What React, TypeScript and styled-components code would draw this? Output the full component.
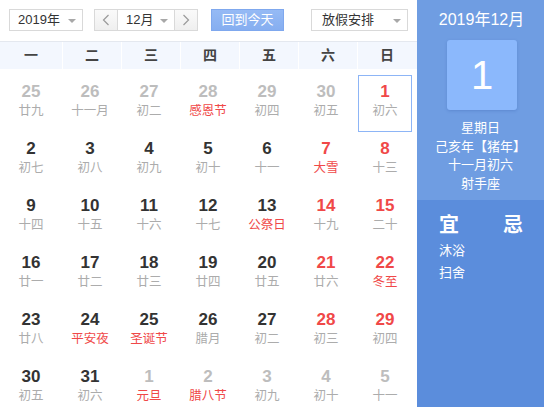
import React from "react";
import styled, { createGlobalStyle } from "styled-components";

const Global = createGlobalStyle`
  html, body { margin: 0; padding: 0; background: #fff; }
  body { font-family: "Liberation Sans", Arial, "Noto Sans CJK SC", sans-serif; }
  * { box-sizing: border-box; }
`;

const Page = styled.div`
  display: flex;
  width: 544px;
  height: 407px;
  overflow: hidden;
  background: #fff;
`;

const Left = styled.div`
  width: 417px;
  flex: none;
  display: flex;
  flex-direction: column;
`;

const Toolbar = styled.div`
  display: flex;
  align-items: center;
  height: 22px;
  margin-top: 9px;
  padding-left: 9px;
`;

const Select = styled.div<{ $w: number; $ml: number; $pl: number }>`
  position: relative;
  width: ${(p) => p.$w}px;
  margin-left: ${(p) => p.$ml}px;
  height: 22px;
  border: 1px solid #d9d9d9;
  background: #fff;
  color: #333;
  font-size: 13px;
  line-height: 20px;
  padding-left: ${(p) => p.$pl}px;
  font-family: "Liberation Sans", Arial, "Noto Sans CJK SC", sans-serif;
`;

const Caret = styled.span`
  position: absolute;
  right: 6px;
  top: 9px;
  width: 0;
  height: 0;
  border-left: 4px solid transparent;
  border-right: 4px solid transparent;
  border-top: 4px solid #a8a8a8;
`;

const MonthGroup = styled.div`
  display: flex;
  margin-left: 11px;
  height: 22px;
`;

const NavBtn = styled.div<{ $side: "l" | "r" }>`
  width: 23px;
  height: 22px;
  border: 1px solid #d9d9d9;
  ${(p) => (p.$side === "l" ? "border-right: none;" : "border-left: none;")}
  background: linear-gradient(#fafafa, #efefef);
  display: flex;
  align-items: center;
  justify-content: center;
`;

const MonthSelect = styled.div`
  position: relative;
  width: 58px;
  height: 22px;
  border: 1px solid #d9d9d9;
  background: #fff;
  color: #333;
  font-size: 13px;
  line-height: 20px;
  padding-left: 8px;
`;

const TodayBtn = styled.div`
  width: 73px;
  height: 22px;
  margin-left: 13px;
  border: 1px solid #7fa8ee;
  background: linear-gradient(#95baf5, #86aef0);
  color: #fff;
  font-size: 13px;
  line-height: 20px;
  text-align: center;
`;

const Header = styled.div`
  display: grid;
  grid-template-columns: 62px repeat(6, 59px);
  margin-top: 10px;
  height: 28px;
  border-top: 1px solid #e4e8ef;
  background: #f3f7fe;
`;

const HeadCell = styled.div<{ $first?: boolean }>`
  text-align: center;
  line-height: 27px;
  font-size: 14px;
  color: #444;
  font-weight: bold;
  border-left: ${(p) => (p.$first ? "none" : "1px solid #fff")};
`;

const Grid = styled.div`
  display: grid;
  grid-template-columns: repeat(7, 54px);
  grid-auto-rows: 57px;
  column-gap: 5px;
  margin-top: 6px;
  padding-left: 4px;
`;

const Cell = styled.div<{ $sel?: boolean }>`
  display: flex;
  flex-direction: column;
  align-items: center;
  padding-top: 6px;
  border: 1px solid ${(p) => (p.$sel ? "#8db5f6" : "transparent")};
`;

const Num = styled.div<{ $tone: "dark" | "red" | "grey" }>`
  font-size: 17px;
  font-weight: bold;
  line-height: 19px;
  color: ${(p) => (p.$tone === "dark" ? "#333" : p.$tone === "red" ? "#f04848" : "#bdbdbd")};
`;

const Lunar = styled.div<{ $red?: boolean }>`
  font-size: 12.5px;
  line-height: 16px;
  margin-top: 1px;
  color: ${(p) => (p.$red ? "#f04848" : "#acacac")};
  font-family: "Noto Sans CJK SC", sans-serif;
  white-space: nowrap;
`;

const Right = styled.div`
  width: 127px;
  flex: none;
  display: flex;
  flex-direction: column;
  color: #fff;
`;

const RightTop = styled.div`
  height: 200px;
  background: #6f9de2;
  display: flex;
  flex-direction: column;
  align-items: center;
  padding-top: 10px;
`;

const Title = styled.div`
  font-size: 16px;
  line-height: 20px;
  padding-left: 2px;
  font-family: "Liberation Sans", Arial, "Noto Sans CJK SC", sans-serif;
`;

const BigDay = styled.div`
  width: 70px;
  height: 70px;
  margin-top: 10px;
  margin-left: 3px;
  border-radius: 3px;
  background: #8bb8fc;
  box-shadow: 0 1px 3px rgba(40, 80, 160, 0.25);
  font-size: 40px;
  line-height: 70px;
  text-align: center;
  font-family: "Liberation Sans", Arial, sans-serif;
`;

const InfoList = styled.div`
  margin-top: 8px;
  display: flex;
  flex-direction: column;
  align-items: center;
  font-size: 13px;
  line-height: 18.5px;
  font-family: "Noto Sans CJK SC", sans-serif;
`;

const RightBottom = styled.div`
  flex: 1;
  background: #5b8ddc;
  display: grid;
  grid-template-columns: 64px 1fr;
  align-content: start;
  padding: 12px 0 0 22px;
  font-family: "Noto Sans CJK SC", sans-serif;
`;

const YiCol = styled.div`
  display: flex;
  flex-direction: column;
`;

const YiHead = styled.div`
  font-size: 20px;
  font-weight: bold;
  line-height: 24px;
  margin-bottom: 3px;
`;

const YiItem = styled.div`
  font-size: 13px;
  line-height: 22px;
`;

const Chevron = ({ dir }: { dir: "l" | "r" }) => (
  <svg width="8" height="12" viewBox="0 0 8 12">
    <path
      d={dir === "l" ? "M6.5 1 L1.5 6 L6.5 11" : "M1.5 1 L6.5 6 L1.5 11"}
      fill="none"
      stroke="#9a9a9a"
      strokeWidth="1.2"
    />
  </svg>
);

type Day = { n: number; l: string; tone: "dark" | "red" | "grey"; lr?: boolean; sel?: boolean };

const d = (n: number, l: string, tone: Day["tone"], lr = false, sel = false): Day => ({ n, l, tone, lr, sel });

const days: Day[] = [
  d(25, "廿九", "grey"), d(26, "十一月", "grey"), d(27, "初二", "grey"), d(28, "感恩节", "grey", true),
  d(29, "初四", "grey"), d(30, "初五", "grey"), d(1, "初六", "red", false, true),
  d(2, "初七", "dark"), d(3, "初八", "dark"), d(4, "初九", "dark"), d(5, "初十", "dark"),
  d(6, "十一", "dark"), d(7, "大雪", "red", true), d(8, "十三", "red"),
  d(9, "十四", "dark"), d(10, "十五", "dark"), d(11, "十六", "dark"), d(12, "十七", "dark"),
  d(13, "公祭日", "dark", true), d(14, "十九", "red"), d(15, "二十", "red"),
  d(16, "廿一", "dark"), d(17, "廿二", "dark"), d(18, "廿三", "dark"), d(19, "廿四", "dark"),
  d(20, "廿五", "dark"), d(21, "廿六", "red"), d(22, "冬至", "red", true),
  d(23, "廿八", "dark"), d(24, "平安夜", "dark", true), d(25, "圣诞节", "dark", true), d(26, "腊月", "dark"),
  d(27, "初二", "dark"), d(28, "初三", "red"), d(29, "初四", "red"),
  d(30, "初五", "dark"), d(31, "初六", "dark"), d(1, "元旦", "grey", true), d(2, "腊八节", "grey", true),
  d(3, "初九", "grey"), d(4, "初十", "grey"), d(5, "十一", "grey"),
];

const weekdays = ["一", "二", "三", "四", "五", "六", "日"];

export default function App() {
  return (
    <Page>
      <Global />
      <Left>
        <Toolbar>
          <Select $w={74} $ml={0} $pl={8}>
            2019年
            <Caret />
          </Select>
          <MonthGroup>
            <NavBtn $side="l">
              <Chevron dir="l" />
            </NavBtn>
            <MonthSelect>
              12月
              <Caret />
            </MonthSelect>
            <NavBtn $side="r">
              <Chevron dir="r" />
            </NavBtn>
          </MonthGroup>
          <TodayBtn>回到今天</TodayBtn>
          <Select $w={97} $ml={27} $pl={10}>
            放假安排
            <Caret />
          </Select>
        </Toolbar>
        <Header>
          {weekdays.map((w, i) => (
            <HeadCell key={w} $first={i === 0}>
              {w}
            </HeadCell>
          ))}
        </Header>
        <Grid>
          {days.map((day, i) => (
            <Cell key={i} $sel={day.sel}>
              <Num $tone={day.tone}>{day.n}</Num>
              <Lunar $red={day.lr}>{day.l}</Lunar>
            </Cell>
          ))}
        </Grid>
      </Left>
      <Right>
        <RightTop>
          <Title>2019年12月</Title>
          <BigDay>1</BigDay>
          <InfoList>
            <div>星期日</div>
            <div>己亥年【猪年】</div>
            <div>十一月初六</div>
            <div>射手座</div>
          </InfoList>
        </RightTop>
        <RightBottom>
          <YiCol>
            <YiHead>宜</YiHead>
            <YiItem>沐浴</YiItem>
            <YiItem>扫舍</YiItem>
          </YiCol>
          <YiCol>
            <YiHead>忌</YiHead>
          </YiCol>
        </RightBottom>
      </Right>
    </Page>
  );
}
